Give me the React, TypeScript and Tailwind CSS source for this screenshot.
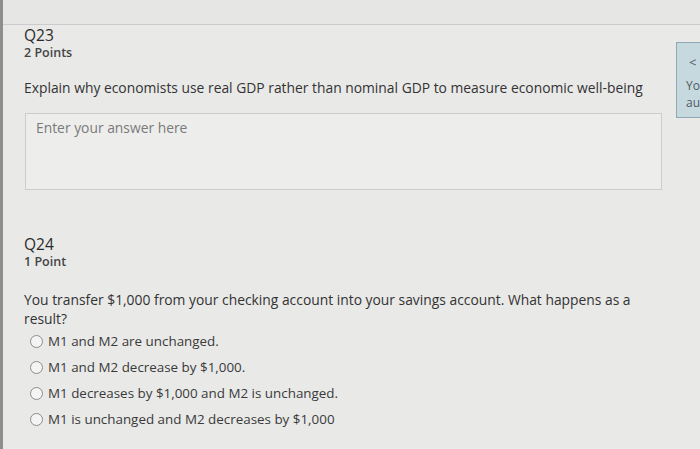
const options = [
  "M1 and M2 are unchanged.",
  "M1 and M2 decrease by $1,000.",
  "M1 decreases by $1,000 and M2 is unchanged.",
  "M1 is unchanged and M2 decreases by $1,000",
]

function Radio() {
  return (
    <span className="inline-block w-[13px] h-[13px] rounded-full border-[1.5px] border-[#8d8d8d] bg-[#f4f4f4] shrink-0" />
  )
}

export default function App() {
  return (
    <div
      className="w-[700px] h-[449px] flex overflow-hidden bg-[#e9e9e8] text-[#333]"
      style={{ fontFamily: '"Open Sans", "Noto Sans", sans-serif' }}
    >
      {/* left edge */}
      <div className="w-[3px] bg-[#8e8e8e] shrink-0" />

      <div className="flex-1 flex flex-col">
        {/* header strip */}
        <div className="h-[25px] border-b border-[#cbcbcb] bg-[#e6e6e5] shrink-0" />

        <div className="flex flex-1">
          {/* questions */}
          <div className="w-[673px] pl-[21px] pr-[8px] shrink-0">
            {/* Q23 */}
            <div className="text-[15.5px] leading-[20px] text-[#2b2b2b]">Q23</div>
            <div className="text-[12.5px] leading-[16px] font-semibold text-[#444]">2 Points</div>
            <p className="mt-[17px] text-[13.85px] leading-[20px] text-[#333]">
              Explain why economists use real GDP rather than nominal GDP to measure economic well-being
            </p>
            <div className="mt-[15px] ml-[1px] w-[637px] h-[77px] border border-[#cdcdcd] bg-[#ededec] pl-[10px] pt-[1px]">
              <span className="text-[13.85px] leading-[20px] text-[#7a7a7a]">Enter your answer here</span>
            </div>

            {/* Q24 */}
            <div className="mt-[44px] text-[15.5px] leading-[20px] text-[#2b2b2b]">Q24</div>
            <div className="text-[12.5px] leading-[16px] font-semibold text-[#444]">1 Point</div>
            <p className="mt-[20px] w-[622px] text-[13.85px] leading-[19px] text-[#333]">
              You transfer $1,000 from your checking account into your savings account. What happens as a
              result?
            </p>
            <div className="flex flex-col">
              {options.map((o) => (
                <div key={o} className="flex items-center gap-[5px] h-[26px] pl-[6px]">
                  <Radio />
                  <span className="text-[13.4px] leading-[20px] text-[#3a3a3a]">{o}</span>
                </div>
              ))}
            </div>
          </div>

          {/* right side panel, cut off */}
          <div className="flex-1 pt-[17px]">
            <div className="w-[200px] h-[76px] border border-[#8fa8b3] bg-[#c6d9de] pl-[9px] pt-[10px] text-[#50595e]">
              <div className="pl-[3px] text-[13px] leading-[18px]">&lt;</div>
              <div className="mt-[6px] text-[12px] leading-[17px]">Yo</div>
              <div className="text-[12px] leading-[17px]">au</div>
            </div>
          </div>
        </div>
      </div>
    </div>
  )
}
